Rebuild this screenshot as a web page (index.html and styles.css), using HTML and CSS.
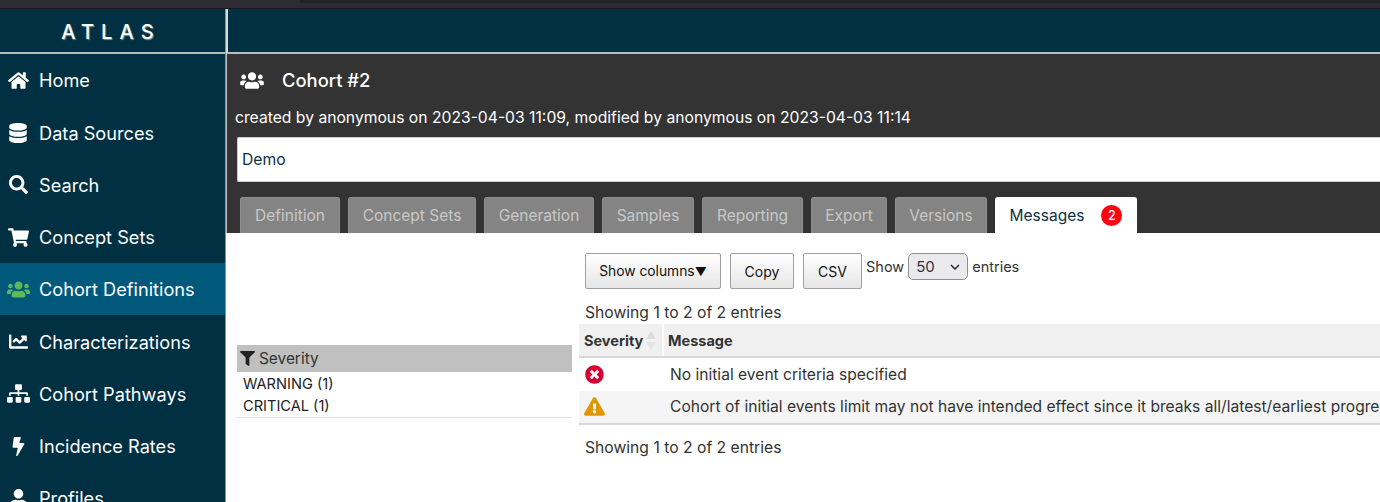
FILE: index.html
```html
<!DOCTYPE html>
<html lang="en">
<head>
<meta charset="utf-8">
<title>ATLAS - Cohort #2</title>
<link rel="stylesheet" href="styles.css">
</head>
<body>
<svg class="defs" aria-hidden="true">
  <symbol id="i-home" viewBox="0 0 576 512"><path d="M280.37 148.26L96 300.11V464a16 16 0 0 0 16 16l112.06-.29a16 16 0 0 0 15.92-16V368a16 16 0 0 1 16-16h64a16 16 0 0 1 16 16v95.64a16 16 0 0 0 16 16.05L464 480a16 16 0 0 0 16-16V300L295.67 148.26a12.19 12.19 0 0 0-15.3 0zM571.6 251.47L488 182.56V44.05a12 12 0 0 0-12-12h-56a12 12 0 0 0-12 12v72.61L318.47 43a48 48 0 0 0-61 0L4.34 251.47a12 12 0 0 0-1.6 16.9l25.5 31A12 12 0 0 0 45.15 301l235.22-193.74a12.19 12.19 0 0 1 15.3 0L530.9 301a12 12 0 0 0 16.9-1.6l25.5-31a12 12 0 0 0-1.7-16.93z"/></symbol>
  <symbol id="i-database" viewBox="0 0 448 512"><path d="M448 73.143v45.714C448 159.143 347.667 192 224 192S0 159.143 0 118.857V73.143C0 32.857 100.333 0 224 0s224 32.857 224 73.143zM448 176v102.857C448 319.143 347.667 352 224 352S0 319.143 0 278.857V176c48.125 33.143 136.208 48.572 224 48.572S399.874 209.143 448 176zm0 160v102.857C448 479.143 347.667 512 224 512S0 479.143 0 438.857V336c48.125 33.143 136.208 48.572 224 48.572S399.874 369.143 448 336z"/></symbol>
  <symbol id="i-search" viewBox="0 0 512 512"><path d="M505 442.7L405.3 343c-4.5-4.5-10.6-7-17-7H372c27.6-35.3 44-79.7 44-128C416 93.1 322.9 0 208 0S0 93.1 0 208s93.1 208 208 208c48.3 0 92.7-16.4 128-44v16.3c0 6.4 2.5 12.5 7 17l99.7 99.7c9.4 9.4 24.6 9.4 33.9 0l28.3-28.3c9.4-9.4 9.4-24.6.1-34zM208 336c-70.7 0-128-57.2-128-128 0-70.7 57.2-128 128-128 70.7 0 128 57.2 128 128 0 70.7-57.2 128-128 128z"/></symbol>
  <symbol id="i-cart" viewBox="0 0 576 512"><path d="M528.12 301.319l47.273-208C578.806 78.301 567.391 64 551.99 64H159.208l-9.166-44.81C147.758 8.021 137.93 0 126.529 0H24C10.745 0 0 10.745 0 24v16c0 13.255 10.745 24 24 24h69.883l70.248 343.435C147.325 417.1 136 435.222 136 456c0 30.928 25.072 56 56 56s56-25.072 56-56c0-15.674-6.447-29.835-16.824-40h209.647C430.447 426.165 424 440.326 424 456c0 30.928 25.072 56 56 56s56-25.072 56-56c0-22.172-12.888-41.332-31.579-50.405l5.517-24.276c3.413-15.018-8.002-29.319-23.403-29.319H218.117l-6.545-32h293.145c11.206 0 20.92-7.754 23.403-18.681z"/></symbol>
  <symbol id="i-users" viewBox="0 0 640 512"><path d="M96 224c35.3 0 64-28.7 64-64s-28.7-64-64-64-64 28.7-64 64 28.7 64 64 64zm448 0c35.3 0 64-28.7 64-64s-28.7-64-64-64-64 28.7-64 64 28.7 64 64 64zm32 32h-64c-17.6 0-33.5 7.1-45.1 18.6 40.3 22.1 68.9 62 75.1 109.4h66c17.7 0 32-14.3 32-32v-32c0-35.3-28.7-64-64-64zm-256 0c61.9 0 112-50.1 112-112S381.9 32 320 32 208 82.1 208 144s50.1 112 112 112zm76.8 32h-8.3c-20.8 10-43.9 16-68.5 16s-47.6-6-68.5-16h-8.3C179.6 288 128 339.6 128 403.2V432c0 26.5 21.5 48 48 48h288c26.5 0 48-21.5 48-48v-28.8c0-63.6-51.6-115.2-115.2-115.2zm-223.7-13.4C161.5 263.1 145.6 256 128 256H64c-35.3 0-64 28.7-64 64v32c0 17.7 14.3 32 32 32h65.9c6.3-47.4 34.9-87.3 75.2-109.4z"/></symbol>
  <symbol id="i-chart" viewBox="0 0 512 512"><path d="M496 384H64V80c0-8.84-7.16-16-16-16H16C7.16 64 0 71.16 0 80v336c0 17.67 14.33 32 32 32h464c8.84 0 16-7.16 16-16v-32c0-8.84-7.16-16-16-16zM464 96H345.94c-21.38 0-32.09 25.85-16.97 40.97l32.4 32.4L288 242.75l-73.37-73.37c-12.5-12.5-32.76-12.5-45.25 0l-68.69 68.69c-6.25 6.25-6.25 16.38 0 22.63l22.62 22.62c6.25 6.25 16.38 6.25 22.63 0L192 237.25l73.37 73.37c12.5 12.5 32.76 12.5 45.25 0l96-96 32.4 32.4c15.12 15.12 40.97 4.41 40.97-16.97V112c0-8.84-7.16-16-16-16z"/></symbol>
  <symbol id="i-sitemap" viewBox="0 0 640 512"><path d="M128 352H32c-17.67 0-32 14.33-32 32v96c0 17.67 14.33 32 32 32h96c17.67 0 32-14.33 32-32v-96c0-17.67-14.33-32-32-32zm-24-80h192v48h48v-48h192v48h48v-57.59c0-21.17-17.23-38.41-38.41-38.41H344v-64h40c17.67 0 32-14.33 32-32V32c0-17.67-14.33-32-32-32H256c-17.67 0-32 14.33-32 32v96c0 17.67 14.33 32 32 32h40v64H94.41C73.23 224 56 241.23 56 262.41V320h48v-48zm264 80h-96c-17.67 0-32 14.33-32 32v96c0 17.67 14.33 32 32 32h96c17.67 0 32-14.33 32-32v-96c0-17.67-14.33-32-32-32zm240 0h-96c-17.67 0-32 14.33-32 32v96c0 17.67 14.33 32 32 32h96c17.67 0 32-14.33 32-32v-96c0-17.67-14.33-32-32-32z"/></symbol>
  <symbol id="i-bolt" viewBox="0 0 320 512"><path d="M296 160H180.6l42.6-129.8C227.2 15 215.7 0 200 0H56C44 0 33.8 8.9 32.2 20.8l-32 240C-1.7 275.2 9.5 288 24 288h118.7L96.6 482.5c-3.6 15.2 8 29.5 23.3 29.5 8.4 0 16.4-4.4 20.8-12l176-304c9.3-15.9-2.2-36-20.7-36z"/></symbol>
  <symbol id="i-user" viewBox="0 0 448 512"><path d="M224 256c70.7 0 128-57.3 128-128S294.7 0 224 0 96 57.3 96 128s57.3 128 128 128zm89.6 32h-16.7c-22.2 10.2-46.9 16-72.9 16s-50.6-5.8-72.9-16h-16.7C60.2 288 0 348.2 0 422.4V464c0 26.5 21.5 48 48 48h352c26.5 0 48-21.5 48-48v-41.6c0-74.2-60.2-134.4-134.4-134.4z"/></symbol>
  <symbol id="i-filter" viewBox="0 0 512 512"><path d="M487.976 0H24.028C2.71 0-8.047 25.866 7.058 40.971L192 225.941V432c0 7.831 3.821 15.17 10.237 19.662l80 55.98C298.02 518.69 320 507.493 320 487.98V225.941l184.947-184.97C520.021 25.896 509.338 0 487.976 0z"/></symbol>
  <symbol id="i-times" viewBox="0 0 512 512"><path d="M256 8C119 8 8 119 8 256s111 248 248 248 248-111 248-248S393 8 256 8zm121.6 313.1c4.7 4.7 4.7 12.3 0 17L338 377.6c-4.7 4.7-12.3 4.7-17 0L256 312l-65.1 65.6c-4.7 4.7-12.3 4.7-17 0L134.4 338c-4.7-4.7-4.7-12.3 0-17l65.6-65-65.6-65.1c-4.7-4.7-4.7-12.3 0-17l39.6-39.6c4.7-4.7 12.3-4.7 17 0l65 65.7 65.1-65.6c4.7-4.7 12.3-4.7 17 0l39.6 39.6c4.7 4.7 4.7 12.3 0 17L312 256l65.6 65.1z"/></symbol>
  <symbol id="i-warn" viewBox="0 0 576 512"><path d="M569.517 440.013C587.975 472.007 564.806 512 527.94 512H48.054c-36.937 0-59.999-40.055-41.577-71.987L246.423 23.985c18.467-32.009 64.72-31.951 83.154 0l239.94 416.028zM288 354c-25.405 0-46 20.595-46 46s20.595 46 46 46 46-20.595 46-46-20.595-46-46-46zm-43.673-165.346l7.418 136c.347 6.364 5.609 11.346 11.982 11.346h48.546c6.373 0 11.635-4.982 11.982-11.346l7.418-136c.375-6.874-5.098-12.654-11.982-12.654h-63.383c-6.884 0-12.356 5.78-11.981 12.654z"/></symbol>
</svg>

<div class="browser-strip"><div class="browser-tab"></div></div>
<div class="app">
  <aside class="sidebar">
    <div class="brand">ATLAS</div>
    <nav class="nav">
      <a class="nav-item"><span class="nav-icon"><svg class="ic-home"><use href="#i-home"/></svg></span>Home</a>
      <a class="nav-item"><span class="nav-icon"><svg class="ic-db"><use href="#i-database"/></svg></span>Data Sources</a>
      <a class="nav-item"><span class="nav-icon"><svg class="ic-search"><use href="#i-search"/></svg></span>Search</a>
      <a class="nav-item"><span class="nav-icon"><svg class="ic-cart"><use href="#i-cart"/></svg></span>Concept Sets</a>
      <a class="nav-item active"><span class="nav-icon"><svg class="ic-users"><use href="#i-users"/></svg></span>Cohort Definitions</a>
      <a class="nav-item"><span class="nav-icon"><svg class="ic-chart"><use href="#i-chart"/></svg></span>Characterizations</a>
      <a class="nav-item"><span class="nav-icon"><svg class="ic-sitemap"><use href="#i-sitemap"/></svg></span>Cohort Pathways</a>
      <a class="nav-item"><span class="nav-icon"><svg class="ic-bolt"><use href="#i-bolt"/></svg></span>Incidence Rates</a>
      <a class="nav-item"><span class="nav-icon"><svg class="ic-user"><use href="#i-user"/></svg></span>Profiles</a>
    </nav>
  </aside>
  <main class="main">
    <div class="topband"></div>
    <section class="panel">
      <div class="title-row">
        <svg class="title-icon"><use href="#i-users"/></svg>
        <h1 class="title">Cohort #2</h1>
      </div>
      <p class="meta">created by anonymous on 2023-04-03 11:09, modified by anonymous on 2023-04-03 11:14</p>
      <div class="name-box">Demo</div>
      <div class="tabs">
        <a class="tab tab-def">Definition</a>
        <a class="tab tab-con">Concept Sets</a>
        <a class="tab tab-gen">Generation</a>
        <a class="tab tab-sam">Samples</a>
        <a class="tab tab-rep">Reporting</a>
        <a class="tab tab-exp">Export</a>
        <a class="tab tab-ver">Versions</a>
        <a class="tab tab-msg">Messages<span class="badge">2</span></a>
      </div>
    </section>
    <section class="content">
      <div class="facets">
        <div class="facet-head"><svg class="filter-icon"><use href="#i-filter"/></svg>Severity</div>
        <div class="facet-list">
          <div class="facet-row">WARNING (1)</div>
          <div class="facet-row">CRITICAL (1)</div>
        </div>
      </div>
      <div class="results">
        <div class="toolbar">
          <button class="btn btn-cols">Show columns<span class="caret">▼</span></button>
          <button class="btn btn-copy">Copy</button>
          <button class="btn btn-csv">CSV</button>
          <div class="length">Show
            <span class="select">50<svg class="chev" viewBox="0 0 10 6"><path d="M1 1l4 4 4-4"/></svg></span>
            entries</div>
        </div>
        <div class="info info-top">Showing 1 to 2 of 2 entries</div>
        <div class="thead">
          <div class="th th-sev">Severity<span class="sort"><i class="up"></i><i class="down"></i></span></div>
          <div class="th th-msg">Message</div>
        </div>
        <div class="tr">
          <div class="td-sev"><svg class="ic-err"><use href="#i-times"/></svg></div>
          <div class="td-msg">No initial event criteria specified</div>
        </div>
        <div class="tr odd">
          <div class="td-sev"><svg class="ic-warn"><use href="#i-warn"/></svg></div>
          <div class="td-msg">Cohort of initial events limit may not have intended effect since it breaks all/latest/earliest progre</div>
        </div>
        <div class="info info-bottom">Showing 1 to 2 of 2 entries</div>
      </div>
    </section>
  </main>
</div>
</body>
</html>
```

FILE: styles.css
```css
* { box-sizing: border-box; }
html, body { margin: 0; height: 100%; overflow: hidden; }
body { font-family: Inter, "Liberation Sans", sans-serif; background: #fff; color: #222; font-size: 15.7px; }
.defs { width: 0; height: 0; display: block; overflow: hidden; }
svg { fill: currentColor; }

.browser-strip { height: 9px; background: #2d2c32; border-bottom: 1px solid #17171a; padding-left: 300px; }
.browser-tab { height: 3px; background: #232226; border-bottom-left-radius: 4px; }
.app { display: flex; height: 493px; }

.sidebar { width: 226px; flex: none; background: #003042; border-right: 1px solid #8f8f8f; overflow: hidden; color: #fff; }
.brand { height: 45px; padding: 3px 3px 0 0; border-bottom: 2px solid #b8bcbd; display: flex; align-items: center; justify-content: center; font-size: 20px; font-weight: 500; letter-spacing: 7.1px; text-shadow: 1px 1px 1px #8b8b8b; }
.nav { padding-top: 0.2px; }
.nav-item { height: 52.25px; display: flex; align-items: center; font-size: 18.2px; color: #fff; }
.nav-item.active { background: #00587a; }
.nav-item.active .nav-icon { color: #5cb85c; }
.nav-icon { width: 39px; flex: none; display: flex; justify-content: center; padding-right: 3px; }
.ic-home { width: 21px; height: 19px; }
.ic-db { width: 18px; height: 20px; }
.ic-search { width: 19px; height: 19px; }
.ic-cart { width: 21px; height: 19px; }
.ic-users { width: 23px; height: 19px; }
.ic-chart { width: 19px; height: 19px; }
.ic-sitemap { width: 23px; height: 19px; }
.ic-bolt { width: 13px; height: 19px; }
.ic-user { width: 17px; height: 19px; }

.main { flex: 1; min-width: 0; overflow: hidden; }
.topband { height: 45px; background: #003042; border-bottom: 2px solid #b8bcbd; border-left: 2px solid #d8dcdd; }
.panel { height: 179px; background: #333; color: #fff; padding: 0 0 0 8px; display: flex; flex-direction: column; border-left: 1px solid #bdbdbd; }
.title-row { height: 52px; display: flex; align-items: center; padding-left: 5px; }
.title-icon { width: 24px; height: 19px; }
.title { margin: 0 0 0 18px; font-size: 18.4px; font-weight: 500; line-height: 24px; }
.meta { margin: 1px 0 0; font-size: 15.7px; line-height: 22px; }
.name-box { margin: 8px 0 0 2px; height: 45px; background: #fff; color: #0d2f44; border-radius: 2px 0 0 2px; display: flex; align-items: center; padding-left: 4px; font-size: 15.7px; border: 1px solid #ccc; border-right: 0; }
.tabs { display: flex; gap: 8px; margin-top: 15px; padding-left: 5px; height: 36px; }
.tab { background: #848484; color: #c8c8c8; font-size: 15.5px; border-radius: 3px 3px 0 0; display: flex; align-items: center; justify-content: center; border: 1px solid #8f8f8f; border-bottom: 0; }
.tab-def { width: 100px; }
.tab-con { width: 128px; }
.tab-gen { width: 110px; }
.tab-sam { width: 92px; }
.tab-rep { width: 101px; }
.tab-exp { width: 76px; }
.tab-ver { width: 92px; }
.tab-msg { width: 142px; background: #fff; color: #0d2f44; border-color: #fff; }
.badge { width: 21px; height: 21px; border-radius: 50%; background: #ff0010; color: #fff; font-size: 12.5px; font-weight: 500; display: flex; align-items: center; justify-content: center; margin-left: 17px; }

.content { display: flex; padding: 0 0 0 11px; }
.facets { width: 335px; flex: none; padding-top: 112px; margin-right: 7px; }
.facet-head { height: 27px; background: #c0c0c0; display: flex; align-items: center; font-size: 15.4px; color: #333; padding-left: 3px; }
.filter-icon { width: 15px; height: 15px; margin-right: 4px; color: #222; }
.facet-list { border-bottom: 1px solid #e4e4e4; height: 46px; padding: 1px 0 0 6px; font-size: 14.6px; color: #222; }
.facet-row { height: 22px; display: flex; align-items: center; }

.results { flex: 1; min-width: 0; overflow: hidden; }
.toolbar { display: flex; align-items: flex-start; padding: 20px 0 0 6px; height: 68px; }
.btn { height: 36px; background: linear-gradient(#fff, #e6e6e6); border: 1px solid #a0a0a0; border-radius: 2px; font-family: inherit; font-size: 14px; color: #111; padding: 0; margin-right: 9px; }
.btn-cols { width: 136px; font-size: 13.8px; }
.caret { font-size: 12px; }
.btn-copy { width: 64px; }
.btn-csv { width: 59px; margin-right: 4px; }
.length { display: flex; align-items: center; gap: 4px; height: 27px; font-size: 14.5px; white-space: nowrap; color: #333; }
.select { width: 60px; height: 27px; border: 1px solid #8f8f94; border-radius: 5px; background: #e9e9ee; display: flex; align-items: center; justify-content: space-between; padding: 0 7px; font-size: 15px; }
.chev { width: 10px; height: 6px; fill: none; stroke: #222; stroke-width: 1.4; }

.info { font-size: 15.7px; padding-left: 6px; color: #333; line-height: 22px; }
.info-top { height: 23px; padding-top: 1px; }
.thead { display: flex; height: 34px; border-bottom: 2px solid #d8d8d8; background: #f0f0f0; font-weight: 700; font-size: 14.5px; color: #333; }
.th { display: flex; align-items: center; }
.th-sev { width: 85px; padding-left: 5px; border-right: 2px solid #fff; }
.th-msg { padding-left: 4px; flex: 1; }
.sort { display: flex; flex-direction: column; gap: 3px; margin-left: 3px; }
.sort i { display: block; width: 0; height: 0; border-left: 5px solid transparent; border-right: 5px solid transparent; }
.sort .up { border-bottom: 8px solid #dcdcdc; }
.sort .down { border-top: 8px solid #e4e4e4; }
.tr { display: flex; align-items: center; height: 33px; white-space: nowrap; font-size: 15.6px; color: #333; }
.tr.odd { background: #f5f5f5; border-bottom: 2px solid #d8d8d8; height: 34px; }
.td-sev { width: 91px; flex: none; padding-left: 5px; display: flex; align-items: center; }
.td-msg { flex: none; }
.tr.odd .td-msg { padding-bottom: 2px; }
.ic-err { width: 19px; height: 19px; color: #d9002f; margin: 0 0 1px 1px; }
.ic-warn { width: 21px; height: 19px; color: #e29600; margin-bottom: 2px; }
.info-bottom { margin-top: 12px; }
```
